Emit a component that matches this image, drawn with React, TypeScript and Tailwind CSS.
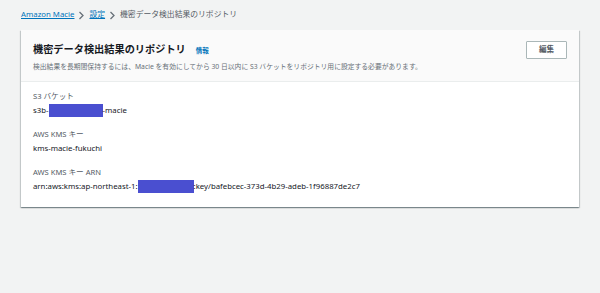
import React from "react";

const font = { fontFamily: '"Noto Sans", "Noto Sans CJK JP", sans-serif' };

function Chevron() {
  return (
    <svg width="7" height="9" viewBox="0 0 7 9" className="mx-[4px]">
      <path d="M1.5 1 L5 4.5 L1.5 8" fill="none" stroke="#687078" strokeWidth="1.3" />
    </svg>
  );
}

function Redact({ w }: { w: number }) {
  return <span className="inline-block h-[13px] bg-[#4a4fd0] align-middle" style={{ width: w }} />;
}

function Field({ label, children }: { label: string; children: React.ReactNode }) {
  return (
    <div className="flex flex-col">
      <div className="text-[7.6px] leading-[14px] text-[#545b64]">{label}</div>
      <div className="flex items-center text-[7.8px] leading-[15px] text-[#16191f]">{children}</div>
    </div>
  );
}

export default function App() {
  return (
    <div className="w-[600px] h-[293px] bg-[#f2f3f3] overflow-hidden" style={font}>
      <nav className="flex items-center h-[30px] pl-[21px] text-[7.8px]">
        <span className="text-[#0073bb] underline decoration-[#0073bb]">Amazon Macie</span>
        <Chevron />
        <span className="text-[#0073bb] underline">設定</span>
        <Chevron />
        <span className="text-[#545b64]">機密データ検出結果のリポジトリ</span>
      </nav>
      <div className="mx-[21px] w-[558px] bg-white shadow-[0_1px_1px_0_rgba(0,28,36,0.3),1px_1px_1px_0_rgba(0,28,36,0.15),-1px_1px_1px_0_rgba(0,28,36,0.15)]">
        <div className="flex justify-between items-start bg-[#fafafa] border-b border-[#eaeded] px-[12px] pt-[11px] pb-[9px]">
          <div>
            <div className="flex items-baseline">
              <span className="text-[10.2px] font-bold leading-[17px] text-[#16191f]">機密データ検出結果のリポジトリ</span>
              <span className="ml-[10px] text-[6.5px] font-bold text-[#0073bb]">情報</span>
            </div>
            <div className="mt-[4px] text-[6.8px] leading-[10px] text-[#687078]">
              検出結果を長期間保持するには、Macie を有効にしてから 30 日以内に S3 バケットをリポジトリ用に設定する必要があります。
            </div>
          </div>
          <button className="h-[18px] w-[41px] border border-[#aab7b8] bg-white text-[7.5px] font-bold text-[#545b64] rounded-[1px]">
            編集
          </button>
        </div>
        <div className="flex flex-col gap-[9px] px-[12px] pt-[7px] pb-[13px]">
          <Field label="S3 バケット">
            s3b-<Redact w={54} />-macie
          </Field>
          <Field label="AWS KMS キー">kms-macie-fukuchi</Field>
          <Field label="AWS KMS キー ARN">
            arn:aws:kms:ap-northeast-1:<Redact w={56} />:key/bafebcec-373d-4b29-adeb-1f96887de2c7
          </Field>
        </div>
      </div>
    </div>
  );
}
